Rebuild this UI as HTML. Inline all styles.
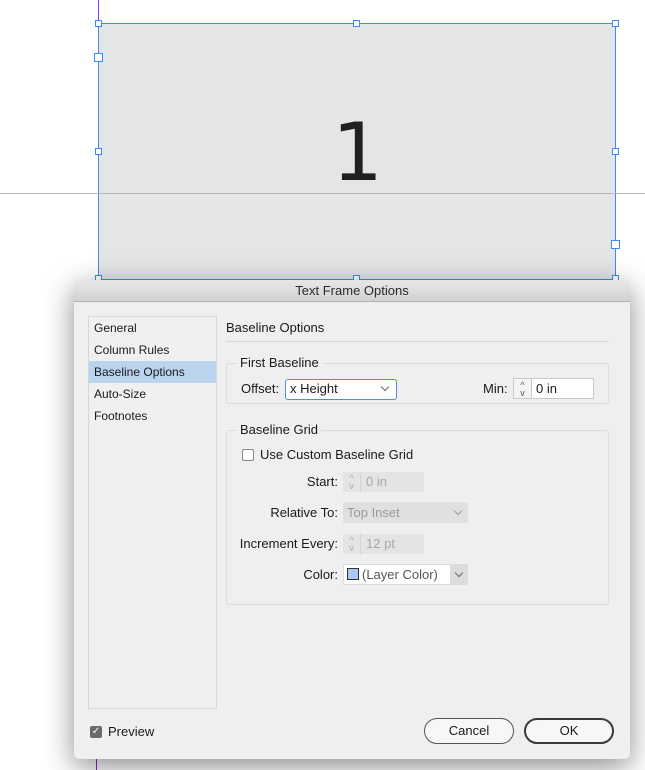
<!DOCTYPE html>
<html><head><meta charset="utf-8"><style>
*{margin:0;padding:0;box-sizing:border-box}
body{width:645px;height:770px;background:#fff;position:relative;overflow:hidden;font-family:"Liberation Sans",sans-serif;font-size:12px;color:#1a1a1a}
.a{position:absolute}
.h{position:absolute;width:7px;height:7px;background:#fff;border:1px solid #3d8af7}
.t{position:absolute;white-space:nowrap;line-height:14px}
.r{text-align:right}
.dis{color:#a8a8a8}
.chev{position:absolute;width:6px;height:6px;border-right:1px solid #666;border-bottom:1px solid #666;transform:rotate(45deg)}
</style></head><body>
<div class="a" style="left:98px;top:0;width:1px;height:23px;background:#9b2cf0"></div>
<div class="a" style="left:96px;top:757px;width:1px;height:13px;background:#7a2ad0"></div>
<div class="a" style="left:98px;top:23px;width:518px;height:257px;background:#e4e5e7;border:1px solid #3d8af7"></div>
<div class="a" style="left:0;top:193px;width:645px;height:1px;background:#b5b5b5"></div>
<div class="a" style="left:332px;top:108px;font-size:80px;line-height:90px;color:#221f20;font-family:'DejaVu Sans',sans-serif">1</div>
<div class="h" style="left:95px;top:20px"></div><div class="h" style="left:353px;top:20px"></div><div class="h" style="left:612px;top:20px"></div>
<div class="h" style="left:94px;top:53px;width:9px;height:9px"></div>
<div class="h" style="left:95px;top:148px"></div><div class="h" style="left:612px;top:148px"></div>
<div class="h" style="left:611px;top:240px;width:9px;height:9px"></div>
<div class="h" style="left:95px;top:275px"></div><div class="h" style="left:353px;top:275px"></div><div class="h" style="left:612px;top:275px"></div>
<!-- dialog -->
<div class="a" style="left:74px;top:280px;width:556px;height:479px;background:#efefef;border-radius:5px;box-shadow:0 8px 30px rgba(0,0,0,.45);overflow:hidden">
 <div class="a" style="left:0;top:0;width:556px;height:22px;background:linear-gradient(#e7e7e7,#d3d3d3);border-bottom:1px solid #b0b0b0;text-align:center;line-height:22px;font-size:13px;color:#2a2a2a">Text Frame Options</div>
</div>
<div class="a" style="left:88px;top:316px;width:129px;height:393px;border:1px solid #d6d6d6;background:#f0f0f0"></div>
<div class="a" style="left:89px;top:361px;width:127px;height:22px;background:#bad3ee"></div>
<div class="t" style="left:94px;top:321px">General</div>
<div class="t" style="left:94px;top:343px">Column Rules</div>
<div class="t" style="left:94px;top:365px">Baseline Options</div>
<div class="t" style="left:94px;top:387px">Auto-Size</div>
<div class="t" style="left:94px;top:409px">Footnotes</div>
<div class="t" style="left:226px;top:321px;font-size:13px">Baseline Options</div>
<div class="a" style="left:226px;top:341px;width:383px;height:1px;background:#d8d8d8"></div>
<div class="a" style="left:226px;top:363px;width:383px;height:41px;border:1px solid #dcdcdc;border-radius:3px"></div>
<div class="t" style="left:237px;top:356px;font-size:13px;background:#efefef;padding:0 3px">First Baseline</div>
<div class="t" style="left:241px;top:382px;font-size:13px">Offset:</div>
<div class="a" style="left:285px;top:379px;width:112px;height:21px;border:1px solid #4a8fe6;border-radius:3px;background:#fff"></div>
<div class="t" style="left:290px;top:382px;font-size:13px">x Height</div>
<div class="chev" style="left:382px;top:384px"></div>
<div class="t" style="left:483px;top:382px;font-size:13px">Min:</div>
<div class="a" style="left:513px;top:378px;width:81px;height:21px;border:1px solid #c8c8c8;background:#fff"></div>
<div class="a" style="left:513px;top:378px;width:19px;height:21px;border:1px solid #c8c8c8;background:#f4f4f4;font-size:9px;line-height:8px;text-align:center;padding-top:2px;color:#555">^<br>v</div>
<div class="t" style="left:536px;top:382px;font-size:13px">0 in</div>
<div class="a" style="left:226px;top:430px;width:383px;height:175px;border:1px solid #dcdcdc;border-radius:3px"></div>
<div class="t" style="left:237px;top:423px;font-size:13px;background:#efefef;padding:0 3px">Baseline Grid</div>
<div class="a" style="left:242px;top:449px;width:12px;height:12px;border:1px solid #888;border-radius:2px;background:#fff"></div>
<div class="t" style="left:260px;top:448px;font-size:13px">Use Custom Baseline Grid</div>
<div class="t r" style="left:200px;width:138px;top:475px;font-size:13px">Start:</div>
<div class="a" style="left:343px;top:472px;width:81px;height:20px;background:#e4e4e4"></div>
<div class="a" style="left:343px;top:472px;width:18px;height:20px;border-right:1px solid #d4d4d4;font-size:9px;line-height:8px;text-align:center;padding-top:2px;color:#aaa">^<br>v</div>
<div class="t dis" style="left:366px;top:475px;font-size:13px">0 in</div>
<div class="t r" style="left:200px;width:138px;top:506px;font-size:13px">Relative To:</div>
<div class="a" style="left:343px;top:502px;width:125px;height:21px;background:#e0e0e0;border-radius:2px"></div>
<div class="t dis" style="left:347px;top:506px;font-size:13px;color:#9a9a9a">Top Inset</div>
<div class="chev" style="left:455px;top:508px;border-color:#999"></div>
<div class="t r" style="left:200px;width:138px;top:537px;font-size:13px">Increment Every:</div>
<div class="a" style="left:343px;top:534px;width:81px;height:20px;background:#e4e4e4"></div>
<div class="a" style="left:343px;top:534px;width:18px;height:20px;border-right:1px solid #d4d4d4;font-size:9px;line-height:8px;text-align:center;padding-top:2px;color:#aaa">^<br>v</div>
<div class="t dis" style="left:366px;top:537px;font-size:13px">12 pt</div>
<div class="t r" style="left:200px;width:138px;top:568px;font-size:13px">Color:</div>
<div class="a" style="left:343px;top:564px;width:125px;height:21px;background:#dcdcdc;border-radius:2px"></div>
<div class="a" style="left:344px;top:565px;width:106px;height:19px;background:#fff"></div>
<div class="a" style="left:347px;top:568px;width:12px;height:12px;background:#a9c9f6;border:1px solid #333"></div>
<div class="t" style="left:362px;top:568px;font-size:13px;color:#555">(Layer Color)</div>
<div class="chev" style="left:456px;top:570px"></div>
<div class="a" style="left:90px;top:726px;width:12px;height:12px;background:#6b6b6b;border-radius:2px;color:#fff;font-size:10px;line-height:12px;text-align:center">✓</div>
<div class="t" style="left:108px;top:725px;font-size:13px">Preview</div>
<div class="a" style="left:424px;top:718px;width:90px;height:26px;border:1px solid #555;border-radius:13px;background:#f7f7f7;text-align:center;line-height:24px;font-size:13px">Cancel</div>
<div class="a" style="left:524px;top:718px;width:90px;height:26px;border:2px solid #3a3a3a;border-radius:13px;background:#f7f7f7;text-align:center;line-height:22px;font-size:13px">OK</div>
</body></html>
